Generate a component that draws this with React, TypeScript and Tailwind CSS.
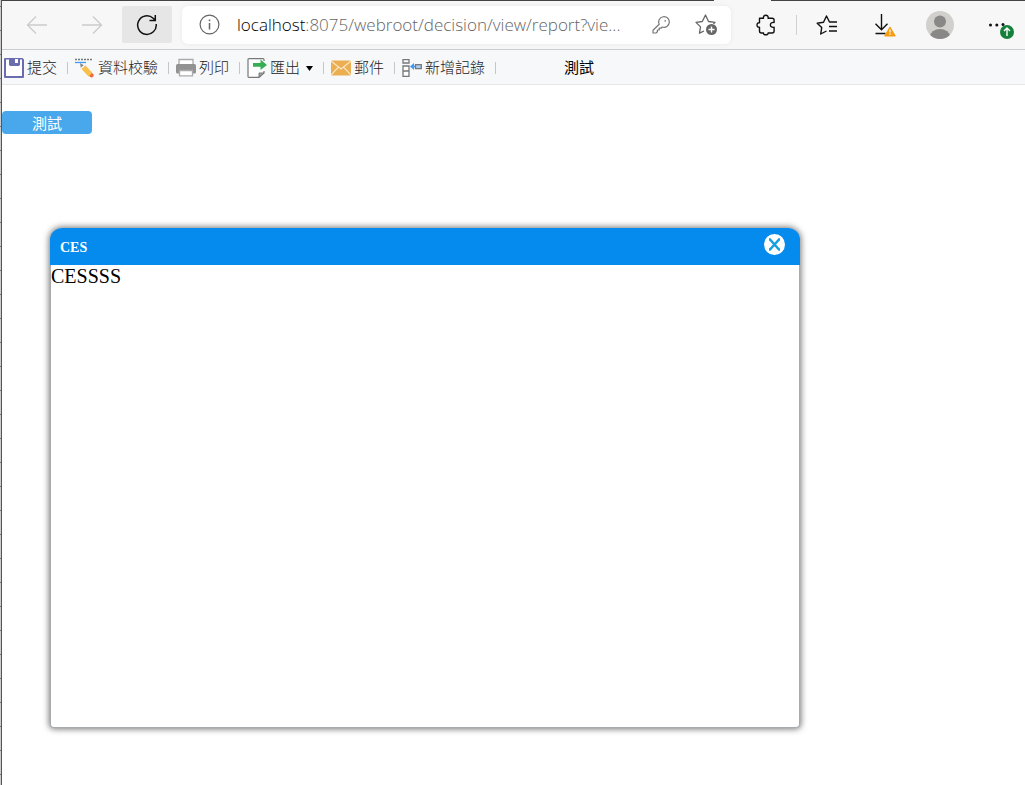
import type { ReactNode } from "react";

const SubmitIcon = () => (
  <svg width="20" height="20" viewBox="0 0 20 20" aria-hidden="true">
    <path
      fill="#6b6bb0"
      fillRule="evenodd"
      d="M1 0h17.5L20 1.5V19a1 1 0 0 1-1 1H1a1 1 0 0 1-1-1V1a1 1 0 0 1 1-1zM2 1.5V18h16V1.500h-2V7a1 1 0 0 1-1 1H6a1 1 0 0 1-1-1V1.500z"
    />
    <path fill="#fff" d="M2 2h3v5l1 1h9l1-1V2h2v16H2zM11 1h3v4h-3z" />
  </svg>
);

const VerifyIcon = () => (
  <svg width="20" height="20" viewBox="0 0 20 20" aria-hidden="true">
    <path stroke="#777" strokeWidth="1.4" strokeDasharray="2 1" d="M0 1.500h18" />
    <path stroke="#3d9bf5" strokeWidth="1.3" d="M0 4.500h11" />
    <path fill="#888" d="M5 5l1 6 4-3z" />
    <path fill="#f9c04d" d="M6 10.500L10 7l7.500 8-4 3.500z" />
    <path fill="#fff" d="M5.600 9.900l3.600-3.200.8 1-3.600 3.200z" />
    <path fill="#ee6a3c" d="M14 18l3-3 1.600 1.500q.6 2.600-2.400 3z" />
  </svg>
);

const PrintIcon = () => (
  <svg width="20" height="20" viewBox="0 0 20 20" aria-hidden="true">
    <path fill="#fff" stroke="#aaa" strokeWidth="1.3" d="M3 7V1.500h14V7" />
    <rect y="6" width="20" height="9.500" rx="1.500" fill="#929292" />
    <path fill="#fff" stroke="#aaa" strokeWidth="1.3" d="M3.500 12.500h13v5.300h-13z" />
  </svg>
);

const ExportIcon = () => (
  <svg width="20" height="20" viewBox="0 0 20 20" aria-hidden="true">
    <path
      fill="#fff"
      stroke="#777"
      strokeWidth="1.2"
      d="M17 13v2l-5 4.400H2a1 1 0 0 1-1-1V1.600a1 1 0 0 1 1-1h14a1 1 0 0 1 1 1V3"
    />
    <path fill="#aaa" stroke="#777" d="M12 19v-4h5z" />
    <path fill="#38ad55" d="M6 5h7.500V1.500L20 7l-6.500 5V8.700H6z" />
  </svg>
);

const MailIcon = () => (
  <svg width="20" height="20" viewBox="0 0 20 20" aria-hidden="true">
    <rect y="2.500" width="20" height="15" rx="1" fill="#ebae50" />
    <path
      fill="none"
      stroke="#fae8cc"
      strokeWidth="1.1"
      d="M0 3l10 8 10-8M0 17l7.500-8M20 17l-7.500-8"
    />
  </svg>
);

const AddRecordIcon = () => (
  <svg width="20" height="20" viewBox="0 0 20 20" aria-hidden="true">
    <path
      fill="#fff"
      stroke="#777"
      strokeWidth="1.3"
      d="M1 1.600h6v3.400H1zM1 8h6v10.400H1zM1 13h6"
    />
    <path stroke="#3d9bf5" strokeWidth="1.5" d="M10 8.500h4" />
    <path fill="#3d9bf5" d="M8 8.500L12 5v7z" />
    <path fill="#a8cdf0" stroke="#777" strokeWidth="1.3" d="M13.500 6.600h5.800v4h-5.800z" />
  </svg>
);

const actions: { icon: ReactNode; label: string; hasMenu?: boolean }[] = [
  { icon: <SubmitIcon />, label: "提交" },
  { icon: <VerifyIcon />, label: "資料校驗" },
  { icon: <PrintIcon />, label: "列印" },
  { icon: <ExportIcon />, label: "匯出", hasMenu: true },
  { icon: <MailIcon />, label: "郵件" },
  { icon: <AddRecordIcon />, label: "新增記錄" },
];

const BrowserBar = () => (
  <header className="flex h-[50px] items-center border-b border-[#cbcdcf] bg-[#f7f7f7]">
    <nav className="flex items-center pl-[10px]">
      <button aria-label="Back" className="flex w-[50px] justify-center">
        <svg width="22" height="20" viewBox="0 0 22 20" fill="none" stroke="#cbcbcb" strokeWidth="1.3">
          <path d="M21 10H1.500M10 1.500L1.500 10l8.500 8.500" />
        </svg>
      </button>
      <button aria-label="Forward" className="ml-[5px] flex w-[50px] justify-center">
        <svg width="22" height="20" viewBox="0 0 22 20" fill="none" stroke="#cbcbcb" strokeWidth="1.3">
          <path d="M1 10h19.500M12 1.500l8.500 8.500-8.500 8.500" />
        </svg>
      </button>
      <button
        aria-label="Refresh"
        className="ml-[5px] flex h-[37px] w-[50px] items-center justify-center rounded-xs bg-[#e6e6e6]"
      >
        <svg width="22" height="22" viewBox="0 0 22 22" fill="none" stroke="#111" strokeWidth="1.5">
          <path d="M20.200 10a9.300 9.300 0 1 1-3-5.800L19 6M19.300 1v5.500h-5.800" />
        </svg>
      </button>
    </nav>

    {/* Address bar */}
    <div className="ml-[10px] flex h-[38px] min-w-0 flex-1 items-center rounded-md bg-white shadow-[0_0_4px_#e8e8e8]">
      <svg className="ml-[17px] shrink-0" width="21" height="21" viewBox="0 0 21 21" fill="none" stroke="#666" strokeWidth="1.2">
        <circle cx="10.500" cy="10.500" r="9.400" />
        <path strokeWidth="1.5" d="M10.500 9v6.500M10.500 5.500v1.700" />
      </svg>
      <p className="ml-[17px] min-w-0 flex-1 truncate font-['Open_Sans',sans-serif] text-[17px] font-light leading-6 text-[#666]">
        <span className="text-black">localhost</span>:8075/webroot/decision/view/report?vie...
      </p>
      <button aria-label="Saved password" className="ml-2">
        <svg width="18" height="18" viewBox="0 0 18 18" fill="none" stroke="#777" strokeWidth="1.2" strokeLinejoin="round">
          <path d="M7.200 8.200A5.300 5.300 0 1 1 10.300 11L9 12.200H7.200V14H5.400v1.800L4 17H1v-2.700z" />
          <circle cx="13.200" cy="4.900" r=".8" fill="#777" stroke="none" />
        </svg>
      </button>
      <button aria-label="Add to favorites" className="ml-[25px] mr-[13px]">
        <svg width="23" height="23" viewBox="0 0 23 23" fill="none">
          <path
            stroke="#666"
            strokeWidth="1.3"
            strokeLinejoin="round"
            d="M9 18l-4.500 2.200 1-6.300L1 9.400l6.300-.9L10.500 2l3 6.500 6.500.9-1.500 1.600"
          />
          <circle cx="16.500" cy="16.500" r="5.500" fill="#666" />
          <path stroke="#fff" strokeWidth="1.4" d="M13.500 16.500h6M16.500 13.500v6" />
        </svg>
      </button>
    </div>

    <div className="flex shrink-0 items-center pl-[25px] pr-[10px]">
      <button aria-label="Extensions">
        <svg width="20" height="22" viewBox="0 0 20 22" fill="none" stroke="#111" strokeWidth="1.4" strokeLinejoin="round">
          <path d="M3.500 4.200h4c-.4-2 .8-3 2.300-3s2.700 1 2.300 3h4a2 2 0 0 1 2 2v2.300c-2.600-.4-3.700.9-3.700 2.400s1.100 2.800 3.700 2.400V17a2 2 0 0 1-2 2h-4c.2 1.300-.9 1.800-2.300 1.800S7.300 20.300 7.500 19h-2a2 2 0 0 1-2-2v-3.700C1.800 13.500 1 12.400 1 11s.8-2.500 2.500-2.300z" />
        </svg>
      </button>
      <span className="ml-[20px] h-5 w-px bg-[#d0d0d0]" />
      <button aria-label="Favorites" className="ml-[19px]">
        <svg width="22" height="22" viewBox="0 0 22 22" fill="none" stroke="#111" strokeWidth="1.4" strokeLinejoin="round">
          <path d="M21 8h-7.500L10.500 2l-3 6.300-6.300.9 4.500 4.400L4.700 20l5.800-3M13 12.500h8M13 17h8" />
        </svg>
      </button>
      <button aria-label="Downloads" className="ml-[36px]">
        <svg width="22" height="24" viewBox="0 0 22 24" fill="none">
          <path stroke="#111" strokeWidth="1.4" d="M7.500 1v15.500M1.500 10.800l6 6 6-6M1.500 20.500h10" />
          <path fill="#f59d0e" stroke="#f59d0e" strokeLinejoin="round" d="M16 14l5.300 9H10.700z" />
          <path stroke="#fff" strokeWidth="1.3" d="M16 16.500v3M16 20.500v1.300" />
        </svg>
      </button>
      <button aria-label="Profile" className="ml-[30px] size-7 overflow-hidden rounded-full bg-[#d2d0cd]">
        <svg width="28" height="28" viewBox="0 0 28 28" fill="#8a8886">
          <circle cx="14" cy="10.500" r="6" />
          <ellipse cx="14" cy="25.500" rx="10" ry="7.500" />
        </svg>
      </button>
      <button aria-label="Settings and more" className="ml-[34px]">
        <svg width="27" height="28" viewBox="0 0 27 28" fill="#111">
          <circle cx="2.500" cy="14" r="1.500" />
          <circle cx="8.800" cy="14" r="1.500" />
          <circle cx="15" cy="13.500" r="1.500" />
          <circle cx="19" cy="21" r="7" fill="#15803a" />
          <path fill="none" stroke="#fff" strokeWidth="1.4" d="M19 25v-8M16 20l3-3 3 3" />
        </svg>
      </button>
    </div>
  </header>
);

const Toolbar = () => (
  <div className="flex h-[35px] items-center border-b border-[#e5e7e9] bg-[#f6f8fa] pl-[2px] pt-[2px] text-[15px] leading-5">
    {actions.map((action) => (
      <div key={action.label} className="flex items-center">
        <button className="flex items-center gap-[3px] whitespace-nowrap font-light text-[#222]">
          {action.icon}
          <span className="pb-[2px]">{action.label}</span>
          {action.hasMenu && (
            <svg className="ml-[3px]" width="7" height="5" viewBox="0 0 7 5" aria-hidden="true">
              <path d="M0 0h7L3.500 5z" />
            </svg>
          )}
        </button>
        <span className="ml-[10px] mr-[7px] h-3 w-px bg-[#c6c6c6]" />
      </div>
    ))}
    <button className="ml-[61px] whitespace-nowrap pb-[2px] text-black">測試</button>
  </div>
);

const Dialog = () => (
  <section
    role="dialog"
    aria-labelledby="dialog-title"
    className="ml-12 mt-[94px] min-h-[500px] w-[750px] max-w-full rounded-t-xl rounded-b-sm border border-t-0 border-[#a8abad] bg-white font-['Liberation_Serif','Noto_Sans_CJK_TC',serif] shadow-[0_0_6px_1px_#777]"
  >
    <div className="-mx-px flex h-[37px] items-center justify-between rounded-t-xl bg-[#058bed] pl-[10px] pr-[15px] pt-[2px]">
      <h2 id="dialog-title" className="text-[14px] font-bold leading-5 text-white">
        CES
      </h2>
      <button aria-label="Close" className="mb-[6px]">
        <svg width="21" height="21" viewBox="0 0 21 21">
          <circle cx="10.500" cy="10.500" r="10.500" fill="#fff" />
          <path fill="none" stroke="#159ee0" strokeWidth="2.400" d="M5 5.500h1l9 10h1M16 5.500h-1l-9 10H5" />
        </svg>
      </button>
    </div>
    <p className="text-[20px] leading-[22px] text-black">CESSSS</p>
  </section>
);

export default function App() {
  return (
    <div className="flex min-h-screen bg-white font-['Noto_Sans_CJK_TC',sans-serif]">
      {/* Window edge */}
      <div className="w-[2px] shrink-0 border-r border-[#555] bg-[repeating-linear-gradient(#ccc_0_6px,#777_6px_7px,#ccc_7px_24px)]" />
      <div className="min-w-0 flex-1">
        {/* Top edge, open below the active tab */}
        <div className="-mb-px flex h-px">
          <span className="relative h-px w-[712px] bg-[#444]" />
          <span className="relative ml-[57px] h-px flex-1 bg-[#444]" />
        </div>
        <BrowserBar />
        <Toolbar />
        <main className="pb-14 pt-[26px]">
          <button className="block h-[23px] w-[90px] rounded-sm bg-[#48a8eb] text-[15px] leading-[23px] text-white">
            測試
          </button>
          <Dialog />
        </main>
      </div>
    </div>
  );
}
